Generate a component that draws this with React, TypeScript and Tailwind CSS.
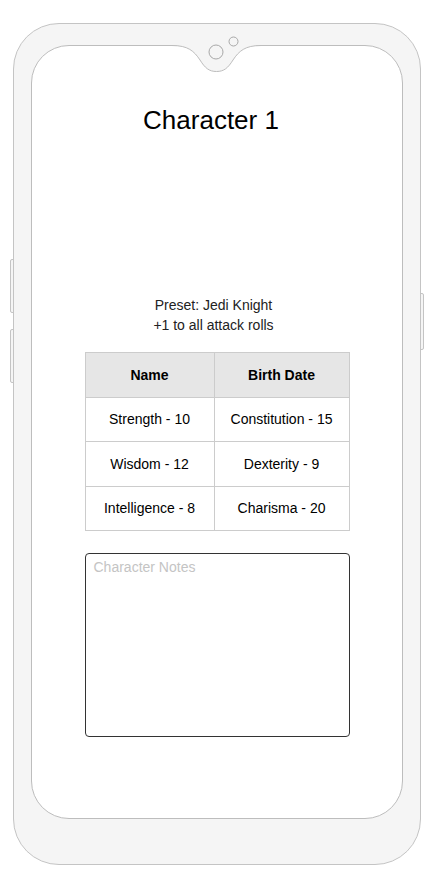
import React from "react";

const stats = [
  ["Strength - 10", "Constitution - 15"],
  ["Wisdom - 12", "Dexterity - 9"],
  ["Intelligence - 8", "Charisma - 20"],
];

function Notch() {
  return (
    <svg
      className="absolute left-[170px] top-[30px]"
      width="96"
      height="50"
      viewBox="170 30 96 50"
      fill="none"
    >
      <path
        d="M172 40 L172 45.5 C188 45.5 194 51 200 60 C205 68 209 71.5 216.5 71.5 C224 71.5 228 68 233 60 C239 51 245 45.5 261 45.5 L261 40 Z"
        fill="#f5f5f5"
      />
      <path
        d="M172 45.5 C188 45.5 194 51 200 60 C205 68 209 71.5 216.5 71.5 C224 71.5 228 68 233 60 C239 51 245 45.5 261 45.5"
        stroke="#bdbdbd"
        strokeWidth="1"
      />
      <circle cx="216" cy="52" r="7" stroke="#a8a8a8" strokeWidth="1" />
      <circle cx="233.5" cy="41.5" r="4.5" stroke="#a8a8a8" strokeWidth="1" />
    </svg>
  );
}

export default function App() {
  return (
    <div
      className="relative w-[436px] h-[876px] bg-white pt-[23px] pl-[13px]"
      style={{ fontFamily: '"Liberation Sans", Arial, sans-serif' }}
    >
      {/* side buttons */}
      <div className="absolute left-[10px] top-[259px] w-[4px] h-[54px] rounded-l-[2px] border border-[#c4c4c4] bg-[#f5f5f5]" />
      <div className="absolute left-[10px] top-[329px] w-[4px] h-[54px] rounded-l-[2px] border border-[#c4c4c4] bg-[#f5f5f5]" />
      <div className="absolute left-[420px] top-[293px] w-[4px] h-[57px] rounded-r-[2px] border border-[#c4c4c4] bg-[#f5f5f5]" />

      {/* phone frame */}
      <div className="relative w-[408px] h-[842px] rounded-[46px] border border-[#c4c4c4] bg-[#f5f5f5] pt-[21px] pl-[17px]">
        <div className="w-[372px] h-[774px] rounded-[38px] border border-[#bdbdbd] bg-white flex flex-col items-center pt-[59px]">
          <h1 className="text-[26px] leading-[30px] text-black pr-[12px]">Character 1</h1>

          <div className="mt-[160px] text-[14px] leading-[20px] text-[#222] text-center pr-[7px]">
            <p>Preset: Jedi Knight</p>
            <p>+1 to all attack rolls</p>
          </div>

          <table className="mt-[17px] w-[265px] border-collapse text-[14px] text-black">
            <thead>
              <tr className="h-[45px] bg-[#e6e6e6]">
                <th className="w-[129px] border border-[#cccccc] font-bold">Name</th>
                <th className="border border-[#cccccc] font-bold">Birth Date</th>
              </tr>
            </thead>
            <tbody>
              {stats.map((row, i) => (
                <tr key={i} className={i === 1 ? "h-[45px]" : "h-[44px]"}>
                  <td className="border border-[#cccccc] text-center">{row[0]}</td>
                  <td className="border border-[#cccccc] text-center">{row[1]}</td>
                </tr>
              ))}
            </tbody>
          </table>

          <textarea
            className="mt-[22px] w-[265px] h-[184px] resize-none rounded-[4px] border border-[#333333] px-[8px] pt-[3px] text-[14px] leading-[20px] text-black placeholder:text-[#c4c4c4] outline-none"
            placeholder="Character Notes"
          />
        </div>
      </div>

      <Notch />
    </div>
  );
}
